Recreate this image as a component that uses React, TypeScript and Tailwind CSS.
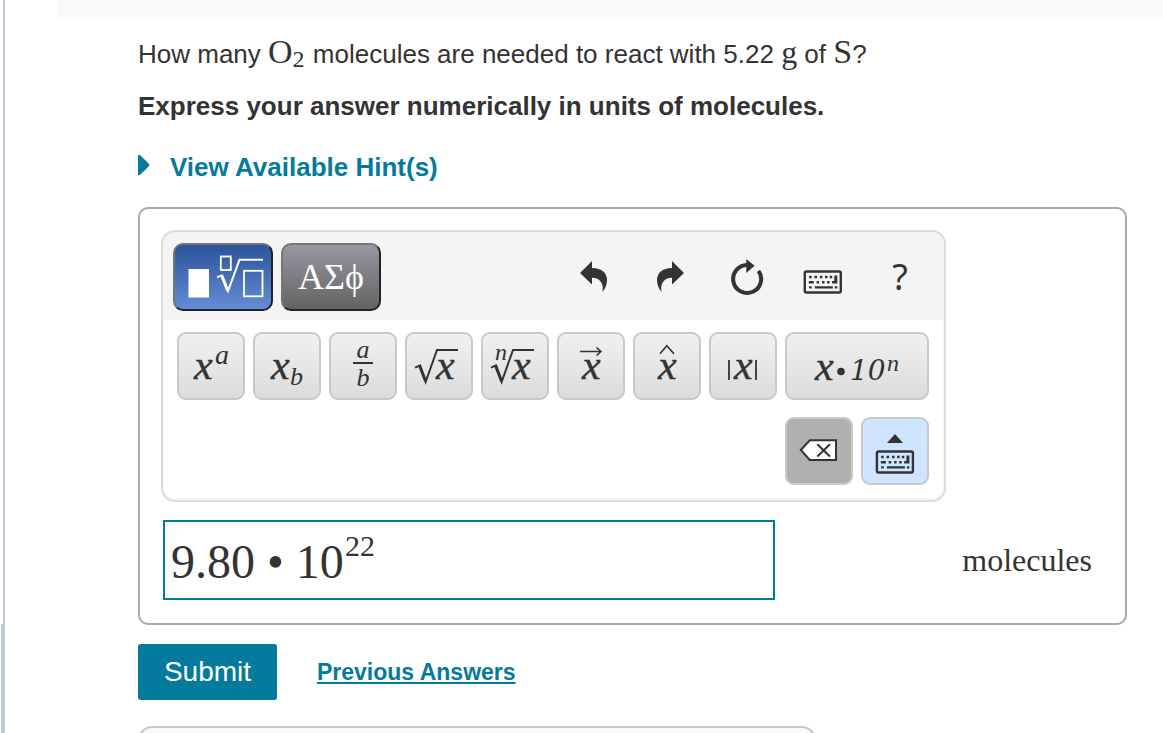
import type { ReactNode } from "react";

const SERIF = "font-['Liberation_Serif',serif]";

function Keyboard() {
  return (
    <>
      <rect x="1.5" y="1.5" width="36" height="21" rx="1.5" fill="none" stroke="currentColor" strokeWidth="2.4" />
      <path
        d="M5.8 5.8h2.5v2.5h-2.5zM11.2 5.8h2.5v2.5h-2.5zM16.6 5.8h2.5v2.5h-2.5zM21.7 5.8h2.5v2.5h-2.5zM26.4 5.8h2.5v2.5h-2.5zM31 5.5h3v8h-5.2v-2.4h2.2zM5.5 11h5v2.4h-5zM13.3 11h2.5v2.4h-2.5zM18.7 11h2.5v2.4h-2.5zM23.8 11h2.5v2.4h-2.5zM5.8 16.2h2.6v2.4h-2.6zM11.5 16.2h18v2.2h-18zM31.5 16.2h2.5v2.4h-2.5z"
        fill="currentColor"
      />
    </>
  );
}

const CURVED_ARROW = "M0 12 L12 0 V7 C22 7 27 12 27 19 C27 24 25 28 22.5 31 C24 22 20 17 12 16.7 V23.5 Z";

function ToolbarButton({ label, children }: { label: string; children: ReactNode }) {
  return (
    <button type="button" aria-label={label} className="h-[68px] w-[76px] text-[#333]">
      <svg viewBox="0 0 76 68" className="block h-full w-full">
        {children}
      </svg>
    </button>
  );
}

function Key({ label, wide, children }: { label: string; wide?: boolean; children: ReactNode }) {
  return (
    <button
      type="button"
      aria-label={label}
      className={
        "h-[68px] rounded-[9px] border-2 border-[#c9c9c9] bg-linear-to-b from-[#f0f0f0] to-[#dcdcdc] text-[#333] " +
        (wide ? "w-36" : "w-[68px]")
      }
    >
      <svg
        viewBox={wide ? "2 2 140 64" : "2 2 64 64"}
        className="block h-full w-full font-['Liberation_Serif',serif] italic"
        fill="currentColor"
      >
        {children}
      </svg>
    </button>
  );
}

function X({ x, y = 47 }: { x: number; y?: number }) {
  return (
    <text x={x} y={y} fontSize="42" stroke="currentColor" strokeWidth="0.4">
      x
    </text>
  );
}

function Radical() {
  return (
    <>
      <path d="M10 35.6 L15 33.4 L20.6 50 L32 18 H53" fill="none" stroke="currentColor" strokeWidth="2" />
      <path d="M14.5 33.5 L20.5 49" fill="none" stroke="currentColor" strokeWidth="3" />
    </>
  );
}

export default function App() {
  return (
    <div className="flex h-screen overflow-hidden bg-white font-['Liberation_Sans',Arial,sans-serif] text-[26px] text-[#333]">
      <div className="flex w-[5px] shrink-0 flex-col items-end">
        <div className="w-0.5 flex-1 bg-[#bccbe0]" />
        <div className="h-[109px] w-1 bg-[#bacbde]" />
      </div>
      <main className="ml-[52px] min-w-0 flex-1">
        <div className="h-[17px] bg-[#f9f9f9]" />
        <div className="pr-9 pl-[81px]">
          <p className="mt-[17px] leading-10">
            How many <span className={SERIF + " text-[34px] leading-8"}>O</span>
            <span className={SERIF + " mr-px align-[-4px] text-2xl leading-4"}>2</span> molecules are needed to react
            with 5.22 <span className={SERIF + " text-[32px] leading-8"}>g</span> of{" "}
            <span className={SERIF + " text-[34px] leading-8"}>S</span>?
          </p>
          <p className="mt-4 leading-8 font-bold">Express your answer numerically in units of molecules.</p>
          <button type="button" className="mt-[29px] flex items-center gap-5 leading-8 font-bold text-[#047a9c]">
            <svg viewBox="0 0 12 20" className="-mt-1 h-5 w-3" fill="currentColor">
              <path d="M0 0 H1 Q2 0 3 1 L10.6 8.6 Q12 10 10.6 11.4 L3 19 Q2 20 1 20 H0 Z" />
            </svg>
            View Available Hint(s)
          </button>

          <section className="mt-6 rounded-[10px] border-2 border-[#a9a9a9] px-[21px] pt-[21px] pb-[23px]">
            <div className="w-[785px] max-w-full rounded-[14px] border-2 border-[#dcdcdc] bg-[#f4f4f4]">
              <div className="flex items-center gap-2 pt-[11px] pr-1.5 pb-[9px] pl-2.5">
                <button
                  type="button"
                  aria-label="Templates"
                  className="h-[68px] w-[100px] rounded-[10px] border-2 border-t-[#757575] border-r-[#222] border-b-[#222] border-l-[#757575] bg-linear-to-b from-[#2c549b] to-[#658cd6] text-white"
                >
                  <svg viewBox="2 2 96 64" className="block h-full w-full" fill="none" stroke="currentColor">
                    <rect x="15.5" y="26" width="20.5" height="28.5" fill="currentColor" stroke="none" />
                    <rect x="47.8" y="13.5" width="10" height="13.5" strokeWidth="1.8" />
                    <path d="M44 34.2 L49 32.4 L55 48 L66.5 16.8 H90" strokeWidth="2" />
                    <path d="M48.8 32.8 L54.8 48" strokeWidth="3" />
                    <rect x="71" y="27.8" width="18.5" height="25.5" strokeWidth="1.8" />
                  </svg>
                </button>
                <button
                  type="button"
                  aria-label="Symbols"
                  className={
                    SERIF +
                    " h-[68px] w-[100px] rounded-[10px] border-2 border-t-[#757575] border-r-[#222] border-b-[#222] border-l-[#757575] bg-linear-to-b from-[#9a97a3] to-[#636363] text-4xl text-white"
                  }
                >
                  ΑΣϕ
                </button>
                <div className="ml-auto flex">
                  <ToolbarButton label="Undo">
                    <path d={CURVED_ARROW} transform="translate(22 18)" fill="currentColor" />
                  </ToolbarButton>
                  <ToolbarButton label="Redo">
                    <path d={CURVED_ARROW} transform="translate(50 18) scale(-1 1)" fill="currentColor" />
                  </ToolbarButton>
                  <ToolbarButton label="Reset">
                    <path d="M48.5 27.8 A14 14 0 1 1 37 22" fill="none" stroke="currentColor" strokeWidth="4" />
                    <path d="M36.3 16 L44.6 22.8 L36.3 30 Z" fill="currentColor" />
                  </ToolbarButton>
                  <ToolbarButton label="Keyboard shortcuts">
                    <g transform="translate(17.3 27)">
                      <Keyboard />
                    </g>
                  </ToolbarButton>
                  <button
                    type="button"
                    aria-label="Help"
                    className="h-[68px] w-[76px] font-['Noto_Sans',sans-serif] text-4xl leading-9"
                  >
                    ?
                  </button>
                </div>
              </div>

              <div className="mx-px mb-0.5 flex flex-wrap justify-end gap-x-2 gap-y-[17px] rounded-b-[10px] bg-white pt-3 pr-3.5 pb-[13px] pl-3">
                <Key label="Superscript">
                  <X x={17} />
                  <text x="38" y="32" fontSize="28">a</text>
                </Key>
                <Key label="Subscript">
                  <X x={18} />
                  <text x="37" y="53" fontSize="26">b</text>
                </Key>
                <Key label="Fraction">
                  <text x="34" y="25.5" fontSize="26" textAnchor="middle">a</text>
                  <rect x="24" y="30" width="20" height="2" />
                  <text x="34" y="53.5" fontSize="26" textAnchor="middle">b</text>
                </Key>
                <Key label="Square root">
                  <Radical />
                  <X x={31} />
                </Key>
                <Key label="Nth root">
                  <Radical />
                  <text x="14" y="28" fontSize="24">n</text>
                  <X x={31} />
                </Key>
                <Key label="Vector">
                  <path d="M23 19.5 H44 M39.5 15.5 L44 19.5 L39.5 23.5" fill="none" stroke="currentColor" strokeWidth="1.6" />
                  <X x={25} />
                </Key>
                <Key label="Hat">
                  <path d="M27 21.8 L33.8 13.8 L41 21.8" fill="none" stroke="currentColor" strokeWidth="1.6" />
                  <X x={25} />
                </Key>
                <Key label="Absolute value">
                  <path d="M20 28 V48 M47 28 V48" stroke="currentColor" strokeWidth="1.8" />
                  <X x={25} />
                </Key>
                <Key label="Scientific notation" wide>
                  <X x={30} y={48} />
                  <circle cx="56" cy="39.5" r="3.8" />
                  <text x="65" y="48" className="font-['DejaVu_Serif',serif]" fontSize="28">
                    10
                  </text>
                  <text x="102" y="39" fontSize="24">n</text>
                </Key>
                <button
                  type="button"
                  aria-label="Delete"
                  className="h-[68px] w-[68px] rounded-[9px] border-2 border-[#c9c9c9] bg-[#b0b0b0] text-[#333]"
                >
                  <svg viewBox="2 2 64 64" className="block h-full w-full" stroke="currentColor" strokeWidth="2">
                    <path d="M15.8 33 L24.8 23.3 H51 V43 H24.8 Z" fill="white" />
                    <path d="M32.3 27.3 L45 39.5 M45 27.3 L32.3 39.5" fill="none" />
                  </svg>
                </button>
                <button
                  type="button"
                  aria-label="Hide keyboard"
                  className="h-[68px] w-[68px] rounded-[9px] border-2 border-[#c9c9c9] bg-[#cfe4ff] text-[#333]"
                >
                  <svg viewBox="2 2 64 64" className="block h-full w-full">
                    <path d="M26 26 L34 17 L42 26 Z" fill="currentColor" />
                    <g transform="translate(14.4 33)">
                      <Keyboard />
                    </g>
                  </svg>
                </button>
              </div>
            </div>

            <div className="mt-[18px] flex items-center justify-between pr-3 pl-0.5">
              <div
                className={SERIF + " flex h-20 w-[612px] items-start border-2 border-[#047a9c] pt-2.5 pl-1.5"}
                role="group"
                aria-label="Answer in molecules"
              >
                <input
                  type="text"
                  aria-label="Value"
                  defaultValue="9.80 • 10"
                  className="h-[60px] w-[174px] text-5xl leading-[60px] outline-none"
                />
                <input
                  type="text"
                  aria-label="Exponent"
                  defaultValue="22"
                  className="h-7 min-w-0 flex-1 text-[30px] leading-7 outline-none"
                />
              </div>
              <span className={SERIF + " text-[32px] leading-10"}>molecules</span>
            </div>
          </section>

          <div className="mt-[19px] flex items-center gap-10">
            <button type="button" className="h-14 w-[139px] rounded-[3px] bg-[#047a9c] text-[28px] text-white">
              Submit
            </button>
            <a href="#previous" className="text-[23px] font-bold text-[#047a9c] underline">
              Previous Answers
            </a>
          </div>
          <div className="mt-[26px] h-24 w-[678px] rounded-[14px] border-2 border-[#c8c8c8] bg-[#f9f9f9]" />
        </div>
      </main>
    </div>
  );
}
